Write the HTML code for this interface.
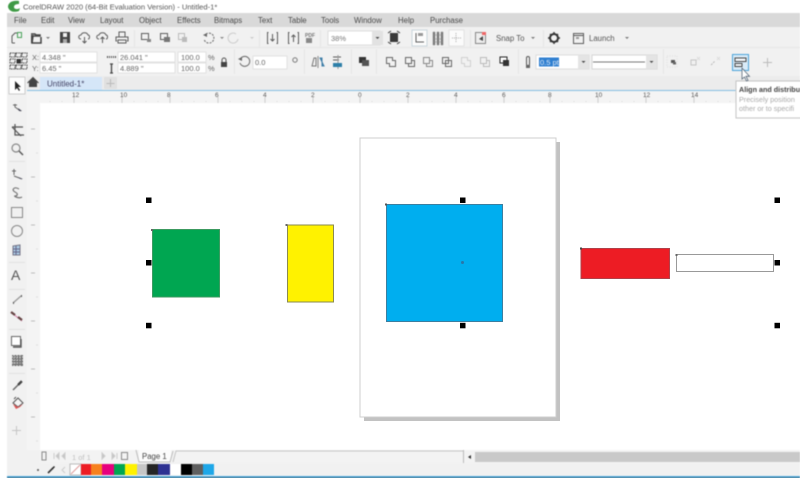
<!DOCTYPE html>
<html lang="en">
<head>
<meta charset="utf-8">
<title>CorelDRAW 2020</title>
<style>
html,body{margin:0;padding:0;background:#fff;width:800px;height:478px;overflow:hidden}
svg{display:block}
text{font-family:"Liberation Sans",sans-serif;fill:#555}
.ui{filter:blur(.55px)}
.m{font-size:7.800px;fill:#4a4a4a}
.t{font-size:7.500px;fill:#666}
.r{font-size:6.500px;fill:#b5b5b5}
.i{fill:none;stroke:#5c5c5c;stroke-width:1}
.d{fill:#444}
.l{fill:none;stroke:#aaa;stroke-width:1}
</style>
</head>
<body>
<svg width="800" height="478" viewBox="0 0 800 478" xmlns="http://www.w3.org/2000/svg">
<rect width="800" height="478" fill="#fff"/>
<g class="ui">
<!-- title -->
<path d="M19 1C12 0 8 3 8 7c1 4 5 6 11 4l1-3c-3 2-6 1-6-1s2-3 5-3z" fill="#3f9a45"/>
<text x="23" y="9.500" style="font-size:7.600px;fill:#555">CorelDRAW 2020 (64-Bit Evaluation Version) - Untitled-1*</text>
<!-- menu -->
<rect x="7" y="13" width="793" height="14" fill="#d9d9d9"/>
<text class="m" x="14" y="23">File</text><text class="m" x="41" y="23">Edit</text><text class="m" x="68" y="23">View</text><text class="m" x="100" y="23">Layout</text><text class="m" x="139" y="23">Object</text><text class="m" x="177" y="23">Effects</text><text class="m" x="214" y="23">Bitmaps</text><text class="m" x="258" y="23">Text</text><text class="m" x="288" y="23">Table</text><text class="m" x="321" y="23">Tools</text><text class="m" x="354" y="23">Window</text><text class="m" x="398" y="23">Help</text><text class="m" x="430" y="23">Purchase</text>
<!-- toolbars bg -->
<rect x="7" y="27" width="793" height="49" fill="#f1f1f1"/>
<rect x="7" y="47" width="793" height="1" fill="#e6e6e6"/>
<rect x="7" y="76" width="793" height="14" fill="#ececec"/>
<!-- toolbar 1 icons -->
<path class="i" d="M12 43v-7l3-3h3M12 43h3"/><rect x="17.500" y="32.500" width="4" height="5" fill="none" stroke="#49a35a"/>
<path d="M31 34h4l1 1h4v1h-7l-1 7h9v-6" fill="none" stroke="#444" stroke-width="1.500"/><path class="d" d="M31 35h2v8h-2z"/>
<path class="d" d="M46 37h4l-2 2z" opacity=".7"/>
<path class="d" d="M60 32h10v11H60z"/><rect x="63" y="33" width="4" height="4" fill="#f1f1f1"/><rect x="63" y="39" width="4" height="4" fill="#aaa"/>
<path class="i" d="M81 39c-3 0-3-4 0-4 1-3 6-3 7 0 2 0 2 4 0 4M84.500 37v6M82.500 41l2 2 2-2"/>
<path class="i" d="M99 39c-3 0-3-4 0-4 1-3 6-3 7 0 2 0 2 4 0 4M102.500 43v-6M100.500 39l2-2 2 2"/>
<path class="i" d="M117 41h-1v-4h12v4h-1M119 37v-5h6v5M118 40h8v3h-8z"/>
<rect x="134" y="30" width=".8" height="17" fill="#e2e2e2"/>
<rect x="141.500" y="33.500" width="7" height="6" class="i"/><rect x="147" y="39" width="4" height="3" fill="#888"/>
<rect x="160.500" y="33.500" width="7" height="6" class="i"/><rect x="164" y="37" width="6" height="5" fill="#777"/>
<rect x="178.500" y="33.500" width="6" height="6" fill="none" stroke="#bbb"/><rect x="182" y="37" width="5" height="5" fill="#bbb"/>
<path d="M206 34a5 5 0 1 1-2 5" fill="none" stroke="#666" stroke-dasharray="2 1.200"/><path d="M203 35l4-2v4z" fill="#666"/>
<path class="d" d="M220 37h4l-2 2z" opacity=".6"/>
<path d="M236 34a5 5 0 1 0 2 5" fill="none" stroke="#ccc"/>
<path d="M250 37h4l-2 2z" fill="#ccc"/>
<rect x="259" y="30" width=".8" height="17" fill="#e2e2e2"/>
<path class="i" d="M268.500 32.500h-1v11h1M276.500 32.500h1v11h-1M272.500 34v7M270.500 39l2 2 2-2"/>
<path class="i" d="M289.500 32.500h-1v11h1M297.500 32.500h1v11h-1M293.500 42v-7M291.500 37l2-2 2 2"/>
<text x="305" y="37" style="font-size:5px;fill:#777;font-weight:bold">PDF</text><rect x="306" y="38" width="6" height="5" fill="#888"/>
<rect x="320" y="30" width=".8" height="17" fill="#e2e2e2"/>
<rect x="328" y="31" width="52" height="14" fill="#fff" stroke="#ddd"/>
<rect x="372" y="31" width="11" height="14" fill="#e2e2e2"/><path class="d" d="M375.500 37h4l-2 2z"/>
<text x="331" y="41" style="font-size:7.500px;fill:#777">38%</text>
<rect x="390" y="33" width="8" height="9" fill="#3a3a3a"/><path d="M388 33l3-2M400 33l-3-2M388 42l3 2M400 42l-3 2" stroke="#3a3a3a"/>
<rect x="412" y="30" width="15" height="16" fill="#fcfcfc" stroke="#c9d5dc"/><path class="i" d="M416 33v9h8"/><path d="M418 33h5v3h-5z" fill="#999"/>
<path d="M433 32h2v13h-2zM437 32h2v13h-2zM441 32h2v13h-2zM433 35h10M433 39h10M433 42h10" fill="#777" stroke="#888" stroke-width=".5"/>
<rect x="449" y="30" width="15" height="16" fill="#fbfbfb" stroke="#e2e2e2"/><path d="M456 33v10M452 38h9" stroke="#aaa" stroke-dasharray="1 1"/>
<rect x="470" y="30" width=".8" height="17" fill="#e2e2e2"/>
<rect x="475.500" y="32.500" width="10" height="11" fill="#eee" stroke="#888"/><path d="M479 39l4-3v5z" fill="#444"/><rect x="482" y="32" width="4" height="3" fill="#e66"/>
<text x="496" y="41" style="font-size:7.800px;fill:#555">Snap To</text>
<path class="d" d="M531 37h4l-2 2z" opacity=".7"/>
<rect x="543" y="30" width=".8" height="17" fill="#e2e2e2"/>
<circle cx="554" cy="38" r="4" fill="none" stroke="#333" stroke-width="2"/><path d="M554 32v2M554 42v2M548 38h2M558 38h2M550 34l1 1M558 34l-1 1M550 42l1-1M558 42l-1-1" stroke="#333" stroke-width="1.400"/>
<rect x="573.500" y="33.500" width="10" height="10" class="i"/><path d="M574 35.500h9" stroke="#555"/><rect x="576" y="37" width="3" height="2" fill="#999"/>
<text x="589" y="41" style="font-size:7.800px;fill:#555">Launch</text>
<path class="d" d="M625 37h4l-2 2z" opacity=".7"/>
<!-- property bar -->
<g fill="#333"><path d="M10 53h5v4h-5zM16 53h5v4h-5zM22 53h5v4h-5zM10 59h5v4h-5zM22 59h5v4h-5zM10 65h5v4h-5zM16 65h5v4h-5zM22 65h5v4h-5z" fill="none" stroke="#444" stroke-width="1" stroke-dasharray="1.500 .8"/><rect x="16.500" y="59" width="4.500" height="4.500"/></g>
<text class="t" x="32" y="60">X:</text><text class="t" x="32" y="71">Y:</text>
<g fill="#fff" stroke="#ddd" stroke-width=".8"><rect x="40" y="52" width="57" height="10"/><rect x="40" y="63" width="57" height="10"/><rect x="118" y="52" width="57" height="10"/><rect x="118" y="63" width="57" height="10"/><rect x="178" y="52" width="28" height="10"/><rect x="178" y="63" width="28" height="10"/><rect x="253" y="56" width="34" height="13"/></g>
<text class="t" x="42" y="60">4.348 "</text><text class="t" x="42" y="71">6.45 "</text>
<text class="t" x="120" y="60">26.041 "</text><text class="t" x="120" y="71">4.889 "</text>
<text class="t" x="181" y="60">100.0</text><text class="t" x="181" y="71">100.0</text>
<text class="t" x="208" y="60">%</text><text class="t" x="208" y="71">%</text>
<path d="M107 57h9" stroke="#555" stroke-width="2" stroke-dasharray="1 1"/><path d="M107 57h1M115 57h1" stroke="#333"/>
<path d="M111.500 64v9M110 64h3M110 73h3" stroke="#444" stroke-width="1.300"/>
<rect x="221" y="62" width="6" height="5" fill="#444"/><path d="M222 62v-2a2 2 0 0 1 4 0v2" fill="none" stroke="#555"/>
<rect x="234" y="49" width=".8" height="25" fill="#e3e3e3"/>
<path d="M241 58a5 5 0 1 1-1 5" fill="none" stroke="#666"/><path d="M238 59l4-2v4z" fill="#666"/>
<text class="t" x="255" y="65">0.0</text>
<circle cx="295" cy="60" r="2.200" fill="none" stroke="#777"/>
<rect x="304" y="49" width=".8" height="25" fill="#e3e3e3"/>
<path d="M314 58h2v8h-4z" fill="none" stroke="#777"/><path d="M318 56v12" stroke="#888"/><path d="M320 58h2v8h2z" fill="#3f7fa8" stroke="#3f7fa8"/>
<path class="i" d="M333 57h8M333 60h6"/><path d="M338 55v14" stroke="#999"/><rect x="333" y="63" width="9" height="4" fill="#2d7fa8"/>
<rect x="351" y="49" width=".8" height="25" fill="#e3e3e3"/>
<rect x="359" y="57" width="7" height="6" fill="#333"/><rect x="362" y="60" width="7" height="6" fill="#555"/>
<rect x="376" y="49" width=".8" height="25" fill="#e3e3e3"/>
<g fill="none" stroke="#666">
<path d="M386.500 57.500h6v3h3v6h-6v-3h-3z"/>
<path d="M405.500 57.500h6v6h-6zM408.500 63.500v3h6v-6h-3"/>
<path d="M423.500 57.500h6v6h-6zM429.500 60.500h3v6h-6v-3" stroke="#888"/>
<path d="M442.500 57.500h6v6h-6zM445.500 60.500h6v6h-6z"/>
<path d="M461.500 57.500h6v3h3v6h-6v-3h-3z" stroke="#d0d0d0"/>
<path d="M480.500 57.500h6v6h-6zM483.500 63.500v3h6v-6h-3" stroke="#bbb"/>
</g>
<rect x="500" y="57" width="7" height="6" fill="#fff" stroke="#222"/><rect x="503" y="60" width="6" height="6" fill="#333"/>
<rect x="518" y="49" width=".8" height="25" fill="#e3e3e3"/>
<rect x="526.500" y="56.500" width="3" height="9" rx="1.500" fill="none" stroke="#555"/><path d="M526 65h4v3h-4z" fill="#666"/>
<rect x="536" y="55" width="53" height="14" fill="#fff" stroke="#ddd"/><rect x="539" y="57.500" width="20" height="9" fill="#2f7fd0"/>
<text x="540" y="65" style="font-size:7.500px;fill:#dfe9f7">0.5 pt</text>
<rect x="578" y="55" width="11" height="14" fill="#e4e4e4"/><path class="d" d="M581.500 61h4l-2 2z"/>
<rect x="592" y="55" width="65" height="14" fill="#fff" stroke="#d5d5d5"/><rect x="646" y="55" width="11" height="14" fill="#e4e4e4"/><path class="d" d="M649.500 61h4l-2 2z"/><path d="M593 62h52" stroke="#777"/>
<rect x="663" y="49" width=".8" height="25" fill="#e3e3e3"/>
<rect x="671" y="60" width="4" height="3" fill="#555"/><rect x="673" y="62" width="3" height="2.500" fill="#666"/><path d="M667 56h10v11h-10z" fill="none" stroke="#ddd" stroke-dasharray="1 1.500"/>
<rect x="691" y="60" width="5" height="5" fill="none" stroke="#c4c4c4"/><path d="M697 57l3 3M700 57l-3 3" stroke="#ddd"/>
<path d="M711 65l4-4" stroke="#bbb" stroke-dasharray="2 1"/><path d="M717 57l3 3M720 57l-3 3" stroke="#ddd"/>
<rect x="732.500" y="54.500" width="16" height="16" fill="#d9ebf8" stroke="#4aa3d8"/>
<path d="M735 58h11v3.500h-11zM735 63.500h7v3h-7z" fill="#f4f8fb" stroke="#444"/>
<rect x="767" y="58" width="1" height="9" fill="#bbb"/><rect x="763" y="62" width="9" height="1" fill="#bbb"/>
<!-- tabs -->
<path d="M29 87v-5l4-4 4 4v5z" fill="#444"/><path d="M27.500 83l5.500-5.500 5.500 5.500" fill="none" stroke="#444"/>
<rect x="40" y="77" width="62" height="13" fill="#d5e6f8"/>
<text x="47" y="86.500" style="font-size:8px;fill:#446">Untitled-1*</text>
<rect x="104" y="77" width="13" height="12" fill="#e0e0e0"/><rect x="110" y="79" width="1" height="8" fill="#bbb"/><rect x="106.500" y="83" width="8" height="1" fill="#bbb"/>
<rect x="27" y="90" width="773" height="1" fill="#85bfe2"/>
<!-- rulers -->
<rect x="27" y="91" width="773" height="12" fill="#f4f4f4"/>
<rect x="27" y="91" width="13" height="359" fill="#f4f4f4"/>
<rect x="7" y="76" width="20" height="387" fill="#f1f1f1"/>
<g class="r"><text x="72" y="97">12</text><text x="120" y="97">10</text><text x="167" y="97">8</text><text x="215" y="97">6</text><text x="263" y="97">4</text><text x="311" y="97">2</text><text x="358" y="97">0</text><text x="406" y="97">2</text><text x="454" y="97">4</text><text x="502" y="97">6</text><text x="548" y="97">8</text><text x="595" y="97">10</text><text x="643" y="97">12</text><text x="691" y="97">14</text></g>
<path d="M74 97v6M122 97v6M170 97v6M218 97v6M265 97v6M313 97v6M360 97v6M408 97v6M456 97v6M504 97v6M550 97v6M598 97v6M646 97v6M694 97v6" stroke="#ccc"/>
<path d="M50 101v1M62 101v1M86 101v1M98 101v1M110 101v1M134 101v1M146 101v1M158 101v1M182 101v1M194 101v1M206 101v1M230 101v1M242 101v1M254 101v1M277 101v1M289 101v1M301 101v1M325 101v1M337 101v1M349 101v1M372 101v1M384 101v1M396 101v1M420 101v1M432 101v1M444 101v1M468 101v1M480 101v1M492 101v1M516 101v1M528 101v1M540 101v1M562 101v1M574 101v1M586 101v1M610 101v1M622 101v1M634 101v1M658 101v1M670 101v1M682 101v1M706 101v1M718 101v1M730 101v1" stroke="#d8d8d8"/>
<path d="M31 129h4M31 177h4M31 225h4M31 273h4M31 321h4M31 369h4M31 417h4" stroke="#bbb"/>
<path d="M36 153h2M36 201h2M36 249h2M36 297h2M36 345h2M36 393h2M36 441h2" stroke="#ddd"/>
<!-- toolbox -->
<rect x="9" y="77" width="16" height="17" fill="#fdfdfd" stroke="#ccc"/>
<path d="M15 81v9l2-2 2 3 1-1-2-3h3z" fill="#222"/>
<path d="M15 104v3l4 3 2 1M13 105h4" fill="none" stroke="#666"/><path d="M18 108l4 3-3 0z" fill="#445"/>
<path d="M12 127l9 9M15 124v11h9M12 127h11" fill="none" stroke="#555" stroke-width="1.200"/>
<circle cx="16" cy="148" r="4" fill="none" stroke="#888" stroke-width="1.200"/><path d="M19 151l4 4" stroke="#555" stroke-width="1.400"/>
<rect x="9" y="161" width="16" height=".8" fill="#ddd"/>
<path d="M14 169v6M12 171h4M14 176l8 3" stroke="#666"/><path d="M18 177l5 2-3 0z" fill="#556"/>
<path d="M19 189c-5-3-8 1-4 3s2 4 0 4 4 3 7 1" fill="none" stroke="#777" stroke-width="1.200"/>
<rect x="11.500" y="207.500" width="11" height="10" fill="none" stroke="#888"/>
<circle cx="17" cy="231" r="5.500" fill="none" stroke="#888"/>
<path d="M13 246l7-1v10h-7z" fill="#a9c9e3" stroke="#778"/><path d="M13 249h7M13 252h7M16 246v9" stroke="#668"/>
<rect x="9" y="262" width="16" height=".8" fill="#ddd"/>
<text x="11" y="280" style="font-size:14px;fill:#555">A</text>
<rect x="9" y="289" width="16" height=".8" fill="#ddd"/>
<path d="M13 303l8-7" stroke="#999" stroke-width="1.300"/><path d="M13 303h1M21 296h1" stroke="#555" stroke-width="2"/>
<path d="M12 313l10 8" stroke="#b05" stroke-width="1" opacity=".5"/><path d="M11 312l4 3M18 317l4 3" stroke="#644" stroke-width="2.300"/>
<rect x="9" y="329" width="16" height=".8" fill="#ddd"/>
<rect x="11.500" y="336.500" width="9" height="9" fill="#fff" stroke="#666"/><path d="M21 339v8h-8" fill="none" stroke="#555" stroke-width="1.400"/>
<rect x="12" y="355" width="11" height="11" fill="#777"/><path d="M12 357h11M12 360h11M12 363h11M14 355v11M17 355v11M20 355v11" stroke="#ddd" stroke-dasharray="1 1.500"/>
<rect x="9" y="373" width="16" height=".8" fill="#ddd"/>
<path d="M13 390l6-6" stroke="#666" stroke-width="1.400"/><path d="M18 384l3-3 1 1-3 3z" fill="#444" stroke="#444"/>
<path d="M13 403l5-5 5 5-5 4z" fill="#f5f5f5" stroke="#555"/><path d="M13 404l5 3 5-3 -3 3-4 2z" fill="#d55"/><path d="M14 399l2-2" stroke="#555"/>
<rect x="16" y="426" width="1" height="9" fill="#c4c4c4"/><rect x="12" y="430" width="9" height="1" fill="#c4c4c4"/>
<!-- bottom -->
<rect x="40" y="450" width="760" height="13" fill="#f3f3f3"/>
<rect x="27" y="463" width="773" height="13" fill="#f1f1f1"/>
<rect x="7" y="463" width="20" height="13" fill="#f1f1f1"/>
<rect x="27" y="450" width="13" height="13" fill="#f1f1f1"/>
<path d="M42 452h4v8h-4z" fill="none" stroke="#888"/>
<path d="M54 453v6M59 453l-3 3 3 3zM65 453l-3 3 3 3z" fill="#c4c4c4" stroke="#ccc"/>
<text x="72" y="460" style="font-size:7.500px;fill:#c0c0c0">1 of 1</text>
<path d="M102 453l3 3-3 3zM112 453l3 3-3 3zM117 453v6" fill="#c4c4c4" stroke="#ccc"/>
<rect x="121.500" y="452.500" width="6" height="7" fill="none" stroke="#888"/>
<rect x="139" y="450" width="32" height="12" fill="#fcfcfc"/>
<path d="M136 450l3 12h31l3-11" fill="none" stroke="#bbb"/>
<path d="M173 462l3-11h287" fill="none" stroke="#c4c4c4"/>
<text x="142" y="459" style="font-size:7.800px;fill:#444">Page 1</text>
<rect x="463" y="450" width="1" height="13" fill="#bbb"/>
<path d="M471 455l-3 2 3 2z" fill="#333"/>
<rect x="475" y="452" width="325" height="10" fill="#c9c9c9"/>
<circle cx="38" cy="470" r="1" fill="#555"/>
<path d="M48 473l5-5" stroke="#333" stroke-width="1.600"/><path d="M52 468l2-2 1 1-2 2z" fill="#222"/>
<path d="M65 467l-3 3 3 3" fill="none" stroke="#ccc"/>
<rect x="70" y="464" width="11" height="11" fill="#fff" stroke="#bbb"/><path d="M71 474l9-9" stroke="#d99"/>
<rect x="81" y="464" width="10" height="11" fill="#ed1c24"/>
<rect x="91" y="464" width="11" height="11" fill="#f7811e"/>
<rect x="102" y="464" width="12" height="11" fill="#e6007e"/>
<rect x="114" y="464" width="11" height="11" fill="#00a651"/>
<rect x="125" y="464" width="12" height="11" fill="#fff200"/>
<rect x="137" y="464" width="10" height="11" fill="#c6c6c6"/>
<rect x="147" y="464" width="11" height="11" fill="#252525"/>
<rect x="158" y="464" width="12" height="11" fill="#2e3192"/>
<rect x="170" y="464" width="11" height="11" fill="#fff"/>
<rect x="181" y="464" width="11" height="11" fill="#000"/>
<rect x="192" y="464" width="11" height="11" fill="#5f5f5f"/>
<rect x="203" y="464" width="11" height="11" fill="#1ea7e8"/>
<rect x="7" y="476" width="793" height="1" fill="#5fb4e5"/>
<rect x="7" y="477" width="793" height="1" fill="#155f85"/>
</g>
<!-- document -->
<g style="filter:blur(.3px)">
<rect x="364" y="142" width="196" height="279" fill="#c2c2c2"/>
<rect x="360" y="138" width="196" height="279" fill="#fff" stroke="#cfcfcf"/>
<rect x="152.500" y="229.500" width="67" height="67.500" fill="#00a651" stroke="#3c9a60"/>
<rect x="287.500" y="225" width="46" height="77" fill="#fff200" stroke="#8a8a50"/>
<rect x="386.500" y="204.500" width="116" height="117" fill="#00aeef" stroke="#3a7ea0"/>
<rect x="581" y="248.500" width="88.500" height="30" fill="#ed1c24" stroke="#b04048"/>
<rect x="676.500" y="254.500" width="97" height="17" fill="#fff" stroke="#999"/>
<g fill="#000">
<rect x="146" y="197.500" width="5.500" height="5.500"/><rect x="146" y="260" width="5.500" height="5.500"/><rect x="146" y="322.800" width="5.500" height="5.500"/>
<rect x="460" y="197.500" width="5.500" height="5.500"/><rect x="460" y="322.800" width="5.500" height="5.500"/>
<rect x="774.500" y="197.500" width="5.500" height="5.500"/><rect x="774.500" y="260" width="5.500" height="5.500"/><rect x="774.500" y="322.800" width="5.500" height="5.500"/>
</g>
<circle cx="462.500" cy="262.500" r="1.500" fill="#2a76a8"/>
<rect x="151" y="229" width="2" height="2" fill="#666"/><rect x="285.500" y="224" width="2" height="2" fill="#666"/><rect x="385" y="203.500" width="2" height="2" fill="#555"/><rect x="580" y="247.500" width="2" height="2" fill="#444"/><rect x="675.500" y="254" width="2" height="2" fill="#666"/>
</g>
<!-- tooltip -->
<g class="ui">
<rect x="736" y="81" width="70" height="37" fill="#fff" stroke="#c4c4c4"/>
<text x="739" y="92" style="font-size:7.200px;font-weight:bold;fill:#444">Align and distribu</text>
<text x="739" y="102" style="font-size:7.200px;fill:#aaa">Precisely position</text>
<text x="739" y="111" style="font-size:7.200px;fill:#aaa">other or to specifi</text>
<path d="M742 68v11l2.500-2 2 4 1.500-.7-2-4h3.500z" fill="#fff" stroke="#567" stroke-width=".8"/>
</g>
</svg>
</body>
</html>
